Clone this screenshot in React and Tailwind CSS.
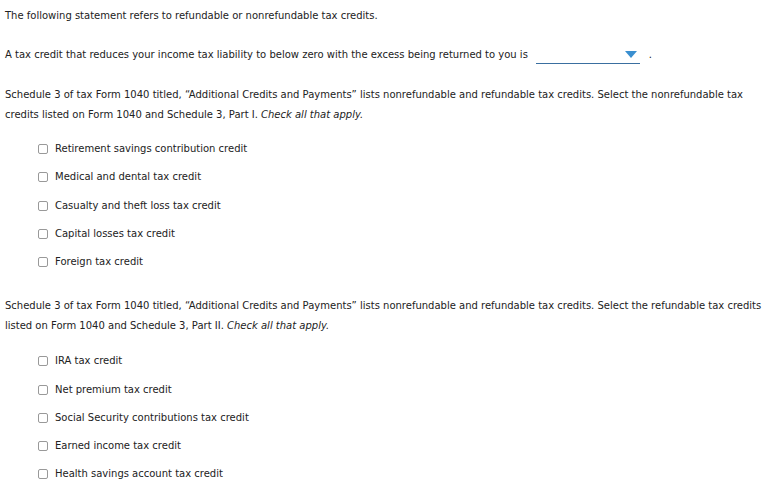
const nonrefundable = [
  "Retirement savings contribution credit",
  "Medical and dental tax credit",
  "Casualty and theft loss tax credit",
  "Capital losses tax credit",
  "Foreign tax credit",
];

const refundable = [
  "IRA tax credit",
  "Net premium tax credit",
  "Social Security contributions tax credit",
  "Earned income tax credit",
  "Health savings account tax credit",
];

const Option = ({ label }) => (
  <label className="flex items-center h-[28.25px]">
    <span className="w-[10px] h-[10px] border border-[#999] rounded-[2px] bg-white mr-[7px]" />
    <span>{label}</span>
  </label>
);

const App = () => {
  return (
    <div
      className="w-[782px] h-[496px] bg-white text-[#222] text-[10px] leading-[20px] px-[5px] overflow-hidden"
      style={{ fontFamily: '"DejaVu Sans", Verdana, sans-serif' }}
    >
      <p className="pt-[6px]">The following statement refers to refundable or nonrefundable tax credits.</p>

      <div className="mt-[19px] flex items-center">
        <span>A tax credit that reduces your income tax liability to below zero with the excess being returned to you is</span>
        <div className="ml-[8px] w-[104px] h-[17px] border-b border-[#3a6fa0] relative">
          <svg className="absolute right-[3px] top-[4px]" width="12" height="7" viewBox="0 0 12 7">
            <polygon points="0,0 12,0 6,7" fill="#3a8fd0" />
          </svg>
        </div>
        <span className="ml-[9px]">.</span>
      </div>

      <p className="mt-[20px]">
        Schedule 3 of tax Form 1040 titled, “Additional Credits and Payments” lists nonrefundable and refundable tax credits. Select the nonrefundable tax credits listed on Form 1040 and Schedule 3, Part I. <i>Check all that apply.</i>
      </p>

      <div className="mt-[10px] pl-[33px]">
        {nonrefundable.map((item) => (
          <Option key={item} label={item} />
        ))}
      </div>

      <p className="mt-[20px]">
        Schedule 3 of tax Form 1040 titled, “Additional Credits and Payments” lists nonrefundable and refundable tax credits. Select the refundable tax credits listed on Form 1040 and Schedule 3, Part II. <i>Check all that apply.</i>
      </p>

      <div className="mt-[11px] pl-[33px]">
        {refundable.map((item) => (
          <Option key={item} label={item} />
        ))}
      </div>
    </div>
  );
};

export default App;
